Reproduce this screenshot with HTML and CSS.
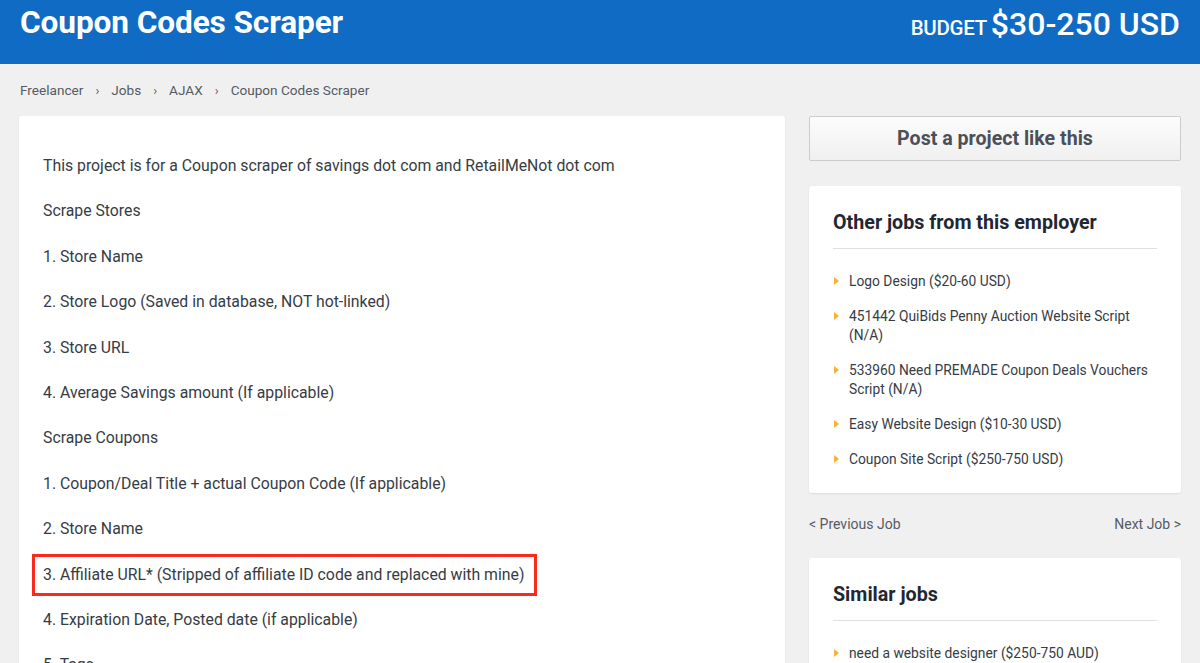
FILE: index.html
```html
<!DOCTYPE html>
<html>
<head>
<meta charset="utf-8">
<link rel="stylesheet" href="styles.css">
</head>
<body>
<header class="topbar">
  <h1 class="title">Coupon Codes Scraper</h1>
  <div class="budget"><span class="budget-label">Budget</span> <span class="budget-value">$30-250 USD</span></div>
</header>
<nav class="crumbs">
  <a>Freelancer</a><span class="sep">›</span><a>Jobs</a><span class="sep">›</span><a>AJAX</a><span class="sep">›</span><span>Coupon Codes Scraper</span>
</nav>
<div class="layout">
  <main class="card main-card">
    <p>This project is for a Coupon scraper of savings dot com and RetailMeNot dot com</p>
    <p>Scrape Stores</p>
    <p>1. Store Name</p>
    <p>2. Store Logo (Saved in database, NOT hot-linked)</p>
    <p>3. Store URL</p>
    <p>4. Average Savings amount (If applicable)</p>
    <p>Scrape Coupons</p>
    <p>1. Coupon/Deal Title + actual Coupon Code (If applicable)</p>
    <p>2. Store Name</p>
    <p class="highlight">3. Affiliate URL* (Stripped of affiliate ID code and replaced with mine)</p>
    <p>4. Expiration Date, Posted date (if applicable)</p>
    <p>5. Tags</p>
  </main>
  <aside class="side">
    <button class="post-btn">Post a project like this</button>
    <section class="card side-card">
      <h2 class="side-title">Other jobs from this employer</h2>
      <ul class="job-list">
        <li>Logo Design ($20-60 USD)</li>
        <li>451442 QuiBids Penny Auction Website Script (N/A)</li>
        <li>533960 Need PREMADE Coupon Deals Vouchers Script (N/A)</li>
        <li>Easy Website Design ($10-30 USD)</li>
        <li>Coupon Site Script ($250-750 USD)</li>
      </ul>
    </section>
    <div class="pager"><a>&lt; Previous Job</a><a>Next Job &gt;</a></div>
    <section class="card side-card">
      <h2 class="side-title">Similar jobs</h2>
      <ul class="job-list">
        <li>need a website designer ($250-750 AUD)</li>
        <li>Website development ($30-250 USD)</li>
      </ul>
    </section>
  </aside>
</div>
</body>
</html>
```
FILE: styles.css
```css
* { box-sizing: border-box; }
html, body { margin: 0; padding: 0; }
body {
  background: #f0f0f0;
  font-family: Roboto, "Liberation Sans", sans-serif;
  color: #363c45;
  overflow: hidden;
  height: 663px;
}
.topbar {
  background: #106bc4;
  height: 64px;
  display: flex;
  justify-content: space-between;
  align-items: flex-start;
  padding: 0 20px;
  color: #fff;
}
.title {
  margin: 0;
  font-size: 31.6px;
  font-weight: 700;
  line-height: 45px;
  letter-spacing: -0.1px;
}
.budget {
  line-height: 48px;
  font-weight: 500;
}
.budget-label {
  text-transform: uppercase;
  font-size: 20.5px;
  letter-spacing: -0.3px;
}
.budget-value {
  font-size: 32px;
}
.crumbs {
  padding: 0 20px;
  height: 52px;
  line-height: 52px;
  font-size: 13.6px;
  color: #555b63;
}
.crumbs .sep {
  margin: 0 12px;
  font-size: 13px;
}
.layout {
  display: flex;
  gap: 24px;
  padding: 0 19px;
  align-items: flex-start;
}
.card {
  background: #fff;
  border-radius: 3px;
  box-shadow: 0 1px 2px rgba(0,0,0,0.08);
}
.main-card {
  width: 766px;
  flex: none;
  padding: 39px 24px 20px 24px;
  font-size: 15.8px;
}
.main-card p {
  margin: 0 0 23.4px 0;
  line-height: 22px;
}
.main-card p.highlight {
  border: 3px solid #fb2a1f;
  width: fit-content;
  margin: -10px -11px 13.4px -11px;
  padding: 7px 10px 7px 8px;
}
.side {
  width: 372px;
  flex: none;
}
.post-btn {
  display: block;
  width: 100%;
  height: 45px;
  font-family: Roboto, "Liberation Sans", sans-serif;
  font-size: 19.6px;
  font-weight: 700;
  color: #4b5058;
  background: linear-gradient(#fcfcfc, #f0f0f0);
  border: 1px solid #cccccc;
  border-radius: 2px;
  margin: 0;
  padding: 0;
}
.side-card {
  margin-top: 25px;
  padding: 24px 24px 24px 24px;
}
.side-title {
  margin: 0;
  font-size: 19.7px;
  font-weight: 700;
  line-height: 26px;
  color: #1f2733;
  padding-bottom: 12px;
  border-bottom: 1px solid #e0e0e0;
}
.job-list {
  list-style: none;
  margin: 23px 0 0 0;
  padding: 0;
  font-size: 13.8px;
  line-height: 19px;
  color: #363c45;
}
.job-list li {
  position: relative;
  padding-left: 16px;
  margin-bottom: 16px;
}
.job-list li:last-child { margin-bottom: 0; }
.job-list li::before {
  content: "";
  position: absolute;
  left: 1px;
  top: 5px;
  border-left: 5px solid #f9b233;
  border-top: 4px solid transparent;
  border-bottom: 4px solid transparent;
}
.pager {
  display: flex;
  justify-content: space-between;
  margin-top: 22px;
  font-size: 14px;
  line-height: 19px;
  color: #555b63;
}
.pager + .side-card { margin-top: 24px; }
```
